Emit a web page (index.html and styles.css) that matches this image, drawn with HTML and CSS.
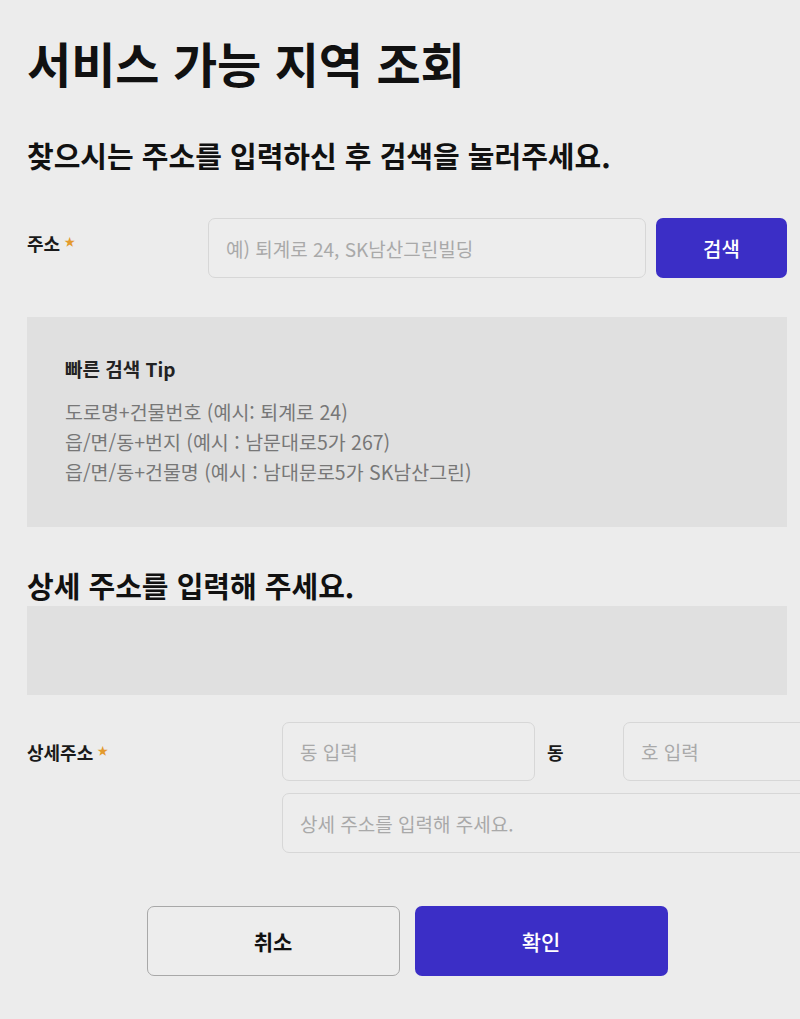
FILE: index.html
```html
<!DOCTYPE html>
<html lang="ko">
<head>
<meta charset="utf-8">
<link rel="stylesheet" href="styles.css">
</head>
<body>
<main class="page">
  <h1 class="title">서비스 가능 지역 조회</h1>
  <h2 class="subtitle">찾으시는 주소를 입력하신 후 검색을 눌러주세요.</h2>
  <div class="addr-row">
    <div class="label">주소<span class="star">★</span></div>
    <div class="field">예) 퇴계로 24, SK남산그린빌딩</div>
    <button class="btn-search">검색</button>
  </div>
  <section class="tip">
    <div class="tip-title">빠른 검색 Tip</div>
    <ul class="tip-list">
      <li>도로명+건물번호 (예시: 퇴계로 24)</li>
      <li>읍/면/동+번지 (예시 : 남문대로5가 267)</li>
      <li>읍/면/동+건물명 (예시 : 남대문로5가 SK남산그린)</li>
    </ul>
  </section>
  <h2 class="subtitle2">상세 주소를 입력해 주세요.</h2>
  <div class="blank"></div>
  <div class="detail">
    <div class="label">상세주소<span class="star">★</span></div>
    <div class="detail-fields">
      <div class="dong-row">
        <div class="field f-dong">동 입력</div>
        <span class="unit">동</span>
        <div class="field f-ho">호 입력</div>
      </div>
      <div class="field f-full">상세 주소를 입력해 주세요.</div>
    </div>
  </div>
  <div class="actions">
    <button class="btn-cancel">취소</button>
    <button class="btn-ok">확인</button>
  </div>
</main>
</body>
</html>
```
FILE: styles.css
```css
html, body {
  margin: 0;
  padding: 0;
  background: #ececec;
  overflow-x: hidden;
}
body {
  font-family: "Noto Sans CJK KR", "Noto Sans", sans-serif;
  color: #111;
}
.page {
  width: 760px;
  padding: 22px 0 0 27px;
}
.title {
  margin: 0;
  font-size: 48px;
  font-weight: 700;
  line-height: 80px;
  color: #111;
}
.subtitle {
  margin: 34px 0 0;
  font-size: 29px;
  font-weight: 700;
  line-height: 38px;
}
.addr-row {
  display: flex;
  align-items: center;
  margin-top: 44px;
}
.label {
  font-size: 18px;
  font-weight: 700;
  color: #1a1a1a;
  display: flex;
  align-items: center;
}
.star {
  color: #e39a2d;
  font-size: 11px;
  margin-left: 4px;
  position: relative;
  top: -2px;
}
.addr-row .label {
  width: 181px;
  margin-bottom: 11px;
}
.field {
  box-sizing: border-box;
  height: 60px;
  border: 1.5px solid #d7d7d7;
  border-radius: 7px;
  background: #ededed;
  color: #a9a9a9;
  font-size: 19px;
  display: flex;
  align-items: center;
  padding-left: 17px;
}
.addr-row .field {
  width: 438px;
}
.btn-search {
  margin-left: 10px;
  width: 131px;
  height: 60px;
  border: none;
  border-radius: 7px;
  background: #3b2ec6;
  color: #fff;
  font-family: inherit;
  font-size: 20px;
  font-weight: 500;
}
.tip {
  margin-top: 39px;
  background: #e0e0e0;
  height: 210px;
  box-sizing: border-box;
  padding: 37px 38px 0;
}
.tip-title {
  font-size: 19px;
  font-weight: 700;
  color: #222;
  line-height: 30px;
}
.tip-list {
  list-style: none;
  margin: 13px 0 0;
  padding: 0;
  color: #777;
  font-size: 19.5px;
  line-height: 30px;
}
.subtitle2 {
  margin: 38px 0 0;
  font-size: 29px;
  font-weight: 700;
  line-height: 40px;
}
.blank {
  background: #e0e0e0;
  height: 89px;
  margin-top: 1px;
}
.detail {
  display: flex;
  margin-top: 27px;
}
.detail .label {
  width: 255px;
  height: 59px;
  flex-shrink: 0;
}
.detail-fields {
  display: flex;
  flex-direction: column;
  gap: 12px;
}
.dong-row {
  display: flex;
  align-items: center;
}
.field.f-dong {
  width: 253px;
  height: 59px;
}
.unit {
  width: 88px;
  padding-left: 12px;
  box-sizing: border-box;
  font-size: 18px;
  font-weight: 700;
  color: #1a1a1a;
}
.field.f-ho {
  width: 260px;
  height: 59px;
}
.field.f-full {
  width: 600px;
  height: 60px;
}
.actions {
  display: flex;
  justify-content: center;
  gap: 15px;
  margin-top: 53px;
}
.actions button {
  width: 253px;
  height: 70px;
  border-radius: 7px;
  font-family: inherit;
  font-size: 21px;
  font-weight: 700;
}
.btn-cancel {
  background: #ededed;
  border: 1.5px solid #a8a8a8;
  color: #111;
}
.actions .btn-ok {
  background: #3b2ec6;
  border: none;
  color: #fff;
  font-weight: 500;
}
```
